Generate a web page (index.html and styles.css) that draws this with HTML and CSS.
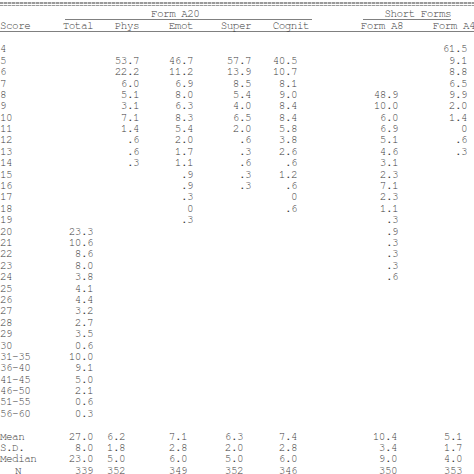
FILE: index.html
```html
<!DOCTYPE html>
<html>
<head>
<meta charset="utf-8">
<link rel="stylesheet" href="styles.css">
</head>
<body>
<div class="sheet">
  <div class="band"></div>
  <div class="groups">
    <div class="group g-a20">Form A20</div>
    <div class="group g-short">Short Forms</div>
  </div>
  <div class="row head">
    <span>Score</span><span>Total</span><span>Phys</span><span>Emot</span><span>Super</span><span>Cognit</span><span>Form A8</span><span>Form A4</span>
  </div>
  <div class="row"></div>
  <div class="row"><span>4</span><span></span><span></span><span></span><span></span><span></span><span></span><span>61.5</span></div>
  <div class="row"><span>5</span><span></span><span>53.7</span><span>46.7</span><span>57.7</span><span>40.5</span><span></span><span>9.1</span></div>
  <div class="row"><span>6</span><span></span><span>22.2</span><span>11.2</span><span>13.9</span><span>10.7</span><span></span><span>8.8</span></div>
  <div class="row"><span>7</span><span></span><span>6.0</span><span>6.9</span><span>8.5</span><span>8.1</span><span></span><span>6.5</span></div>
  <div class="row"><span>8</span><span></span><span>5.1</span><span>8.0</span><span>5.4</span><span>9.0</span><span>48.9</span><span>9.9</span></div>
  <div class="row"><span>9</span><span></span><span>3.1</span><span>6.3</span><span>4.0</span><span>8.4</span><span>10.0</span><span>2.0</span></div>
  <div class="row"><span>10</span><span></span><span>7.1</span><span>8.3</span><span>6.5</span><span>8.4</span><span>6.0</span><span>1.4</span></div>
  <div class="row"><span>11</span><span></span><span>1.4</span><span>5.4</span><span>2.0</span><span>5.8</span><span>6.9</span><span>0</span></div>
  <div class="row"><span>12</span><span></span><span>.6</span><span>2.0</span><span>.6</span><span>3.8</span><span>5.1</span><span>.6</span></div>
  <div class="row"><span>13</span><span></span><span>.6</span><span>1.7</span><span>.3</span><span>2.6</span><span>4.6</span><span>.3</span></div>
  <div class="row"><span>14</span><span></span><span>.3</span><span>1.1</span><span>.6</span><span>.6</span><span>3.1</span><span></span></div>
  <div class="row"><span>15</span><span></span><span></span><span>.9</span><span>.3</span><span>1.2</span><span>2.3</span><span></span></div>
  <div class="row"><span>16</span><span></span><span></span><span>.9</span><span>.3</span><span>.6</span><span>7.1</span><span></span></div>
  <div class="row"><span>17</span><span></span><span></span><span>.3</span><span></span><span>0</span><span>2.3</span><span></span></div>
  <div class="row"><span>18</span><span></span><span></span><span>0</span><span></span><span>.6</span><span>1.1</span><span></span></div>
  <div class="row"><span>19</span><span></span><span></span><span>.3</span><span></span><span></span><span>.3</span><span></span></div>
  <div class="row"><span>20</span><span>23.3</span><span></span><span></span><span></span><span></span><span>.9</span><span></span></div>
  <div class="row"><span>21</span><span>10.6</span><span></span><span></span><span></span><span></span><span>.3</span><span></span></div>
  <div class="row"><span>22</span><span>8.6</span><span></span><span></span><span></span><span></span><span>.3</span><span></span></div>
  <div class="row"><span>23</span><span>8.0</span><span></span><span></span><span></span><span></span><span>.3</span><span></span></div>
  <div class="row"><span>24</span><span>3.8</span><span></span><span></span><span></span><span></span><span>.6</span><span></span></div>
  <div class="row"><span>25</span><span>4.1</span></div>
  <div class="row"><span>26</span><span>4.4</span></div>
  <div class="row"><span>27</span><span>3.2</span></div>
  <div class="row"><span>28</span><span>2.7</span></div>
  <div class="row"><span>29</span><span>3.5</span></div>
  <div class="row"><span>30</span><span>0.6</span></div>
  <div class="row"><span>31-35</span><span>10.0</span></div>
  <div class="row"><span>36-40</span><span>9.1</span></div>
  <div class="row"><span>41-45</span><span>5.0</span></div>
  <div class="row"><span>46-50</span><span>2.1</span></div>
  <div class="row"><span>51-55</span><span>0.6</span></div>
  <div class="row"><span>56-60</span><span>0.3</span></div>
  <div class="row"></div>
  <div class="row stats"><span>Mean</span><span>27.0</span><span>6.2</span><span>7.1</span><span>6.3</span><span>7.4</span><span>10.4</span><span>5.1</span></div>
  <div class="row stats"><span>S.D.</span><span>8.0</span><span>1.8</span><span>2.8</span><span>2.0</span><span>2.8</span><span>3.4</span><span>1.7</span></div>
  <div class="row stats"><span>Median</span><span>23.0</span><span>5.0</span><span>6.0</span><span>5.0</span><span>6.0</span><span>9.0</span><span>4.0</span></div>
  <div class="row stats"><span class="n">N</span><span>339</span><span>352</span><span>349</span><span>352</span><span>346</span><span>350</span><span>353</span></div>
</div>
</body>
</html>
```

FILE: styles.css
```css
html, body {
  margin: 0;
  padding: 0;
  background: #ffffff;
}

.sheet {
  width: 474px;
  height: 474px;
  overflow: hidden;
  font-family: "Nimbus Mono PS", "FreeMono", "Liberation Mono", "Courier New", monospace;
  font-size: 11px;
  letter-spacing: -0.55px;
  color: #3c3c3c;
}

.band {
  height: 4.5px;
  margin: 1.5px 0 3.2px;
  background:
    linear-gradient(180deg, transparent 0 1.7px, #ffffff 1.7px 2.7px, transparent 2.7px),
    repeating-linear-gradient(90deg, #9a9a9a 0 3px, #d0d0d0 3px 4px);
}

.groups {
  height: 11.4px;
  display: grid;
  grid-template-columns: 65px 247px 51px 88px;
}

.group {
  line-height: 10px;
  height: 10px;
  border-bottom: 1px solid #808080;
  white-space: nowrap;
}

.g-a20 {
  grid-column: 2;
  padding-left: 86px;
}

.g-short {
  grid-column: 4;
  text-align: right;
}

.row {
  display: grid;
  grid-template-columns: 60px 33px 46px 54px 58px 46px 101px 69px;
  height: 11.4px;
  line-height: 11.4px;
  white-space: nowrap;
}

.row span {
  text-align: right;
}

.row span:first-child {
  text-align: left;
}

.row.head {
  grid-template-columns: 60px 33px 46px 54px 58px 58px 94px 72px;
  box-sizing: border-box;
  line-height: 10.4px;
  border-bottom: 1px solid #808080;
}

.row.stats {
  grid-template-columns: 60px 33px 32px 62px 56px 54px 100px 65px;
}

.row span.n {
  padding-left: 15px;
}
```
